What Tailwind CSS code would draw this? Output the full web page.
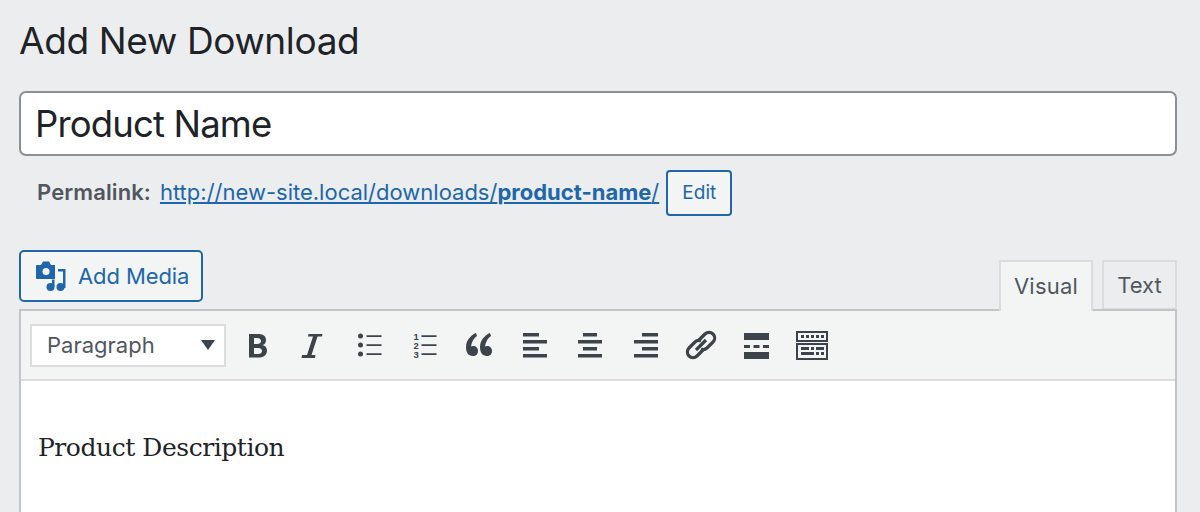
<!DOCTYPE html>
<html><head><meta charset="utf-8"><script src="https://cdn.jsdelivr.net/npm/@tailwindcss/browser@4"></script></head>
<body class="m-0 h-[512px] w-[1200px] overflow-hidden bg-[#ecedef] font-['Inter',sans-serif] text-[#1d2327]">
<div class="flex flex-col pl-[19px] pr-[23px]">
  <h1 class="mt-[19px] h-[44px] text-[37px] leading-[44px] font-normal tracking-[-0.35px] text-[#1d2327]">Add New Download</h1>
  <div class="mt-[28px] flex h-[65px] w-[1158px] items-center rounded-[7px] border-2 border-[#8c8f94] bg-white pl-[14px] pt-[2px] text-[36.5px] tracking-[-0.85px] text-[#1d2327]">Product Name</div>
  <div class="mt-[14px] flex h-[46px] items-center pl-[18px] text-[22px] text-[#50575e]">
    <span class="pb-[2px] font-semibold tracking-[0.1px]">Permalink:</span>
    <a class="ml-[9px] pb-[2px] text-[#2066ac] underline">http://new-site.local/downloads/<b class="font-bold">product-name</b>/</a>
    <span class="ml-[7px] flex h-[46px] w-[66px] items-center justify-center rounded-[4px] border-2 border-[#2066ac] bg-[#f3f5f5] pt-[1px] text-[19px] text-[#2066ac]">Edit</span>
  </div>
  <div class="mt-[34px] flex h-[59px] items-end justify-between">
    <div class="mb-[7px] flex h-[52px] w-[184px] items-center rounded-[5px] border-2 border-[#2066ac] bg-[#f3f5f5] pl-[15px] text-[22px] tracking-[-0.1px] text-[#2066ac]">
      <svg class="mr-[12px] h-[30px] w-[30px] shrink-0" viewBox="0 0 30 30" fill="#2066ac"><path d="M1 4h4l2-3.500h6L15 4h4v14H1a1 1 0 0 1-1-1V5a1 1 0 0 1 1-1z"/><circle cx="10" cy="10.500" r="3.500" fill="#f3f5f5"/><path d="M22 8h7.500v19h-2.500V10.500h-5z"/><circle cx="24.500" cy="26" r="4"/><path d="M16 18.500h2.500V26H16z"/><circle cx="14.500" cy="26" r="4"/></svg>
      Add Media
    </div>
    <div class="flex items-end">
      <div class="relative z-10 -mb-[2px] flex h-[51px] w-[94px] items-center justify-center border-2 border-b-0 border-[#dcdcde] bg-[#f3f5f5] pb-[1px] text-[22px] tracking-[0.2px] text-[#50575e]">Visual</div>
      <div class="ml-[9px] -mb-[1px] flex h-[50px] w-[75px] items-center justify-center border-2 border-[#dcdcde] bg-[#ecedef] text-[22px] text-[#50575e]">Text</div>
    </div>
  </div>
  <div class="h-[203px] w-[1158px] border-2 border-b-0 border-[#c3c4c7] bg-white">
    <div class="flex h-[70px] items-center border-b-2 border-[#dcdcde] bg-[#f3f5f5] pl-[9px] text-[#3c434a]">
      <div class="flex h-[43px] w-[196px] items-center justify-between border-2 border-[#dcdcde] bg-white pl-[15px] pr-[8px] text-[22px] text-[#50575e]">Paragraph
        <svg class="h-[12px] w-[16px]" viewBox="0 0 16 12" fill="#3c434a"><path d="M1 1h14l-7 10z"/></svg></div>
      <div class="ml-[4px] flex h-[40px] items-center">
        <svg class="ml-[9px] mr-[10.500px] h-[36px] w-[36px] shrink-0" viewBox="0 0 36 36" fill="#3c434a"><path fill-rule="evenodd" d="M10 7h9c5 0 8 2 8 6 0 3-1.500 4.500-3.500 5 2.500.5 4.500 2.500 4.500 5.500 0 4.500-3.500 7-8 7H10zM15 11v6h3c2.500 0 4-1 4-3s-1.500-3-4-3zM15 21v6h4c2.500 0 4-1 4-3s-1.500-3-4-3z"/></svg>
        <svg class="ml-[9px] mr-[10.500px] h-[36px] w-[36px] shrink-0" viewBox="1.500 0 36 36" fill="#3c434a"><path d="M15 7h14l-.6 2.500h-4.400L18 28h4l-.6 3H8l.6-3h4.900L19.500 9.500h-5z"/></svg>
        <svg class="ml-[9px] mr-[10.500px] h-[36px] w-[36px] shrink-0" viewBox="-1 0 36 36" fill="#3c434a"><circle cx="9.500" cy="9" r="2.500"/><circle cx="9.500" cy="18" r="2.500"/><circle cx="9.500" cy="27" r="2.500"/><path d="M15.500 8.200h15v1.700h-15zM15.500 17.200h15v1.700h-15zM15.500 26.200h15v1.700h-15z"/></svg>
        <svg class="ml-[9px] mr-[10.500px] h-[36px] w-[36px] shrink-0" viewBox="0 0 36 36" fill="#3c434a"><path d="M15.500 8.200h15v1.700h-15zM15.500 17.200h15v1.700h-15zM15.500 26.200h15v1.700h-15z"/><text x="7.500" y="12.500" font-size="9.500" font-weight="700" font-family="Liberation Sans">1</text><text x="7.500" y="21.500" font-size="9.500" font-weight="700" font-family="Liberation Sans">2</text><text x="7.500" y="30.500" font-size="9.500" font-weight="700" font-family="Liberation Sans">3</text></svg>
        <svg class="ml-[9px] mr-[10.500px] h-[36px] w-[36px] shrink-0" viewBox="0 0 36 36" fill="#3c434a"><path d="M15 6c-3 1-10 6-10 14 0 5 2 9 7 9 3 0 5-2 5-5 0-3-2-5-5-5-1 0-1.500.2-2 .5C10.500 15 13 11 16 9zM29 6c-3 1-10 6-10 14 0 5 2 9 7 9 3 0 5-2 5-5 0-3-2-5-5-5-1 0-1.500.2-2 .5C24.500 15 27 11 30 9z"/></svg>
        <svg class="ml-[9px] mr-[10.500px] h-[36px] w-[36px] shrink-0" viewBox="0 0 36 36" fill="#3c434a"><path d="M6 6h16v3.500H6zM6 13h24v3.500H6zM6 20h16v3.500H6zM6 27h24v3.500H6z"/></svg>
        <svg class="ml-[9px] mr-[10.500px] h-[36px] w-[36px] shrink-0" viewBox="0 0 36 36" fill="#3c434a"><path d="M11 6h14v3.500H11zM6 13h24v3.500H6zM11 20h14v3.500H11zM6 27h24v3.500H6z"/></svg>
        <svg class="ml-[9px] mr-[10.500px] h-[36px] w-[36px] shrink-0" viewBox="0 0 36 36" fill="#3c434a"><path d="M14 6h16v3.500H14zM6 13h24v3.500H6zM14 20h16v3.500H14zM6 27h24v3.500H6z"/></svg>
        <svg class="ml-[9px] mr-[10.500px] h-[36px] w-[36px] shrink-0" viewBox="0 0 36 36" fill="none" stroke="#3c434a" stroke-width="3.200"><path d="M16 13l6-6a5.500 5.500 0 0 1 8 8l-6 6a5.500 5.500 0 0 1-6 1"/><path d="M20 23l-6 6a5.500 5.500 0 0 1-8-8l6-6a5.500 5.500 0 0 1 6-1"/><path d="M13 23l10-10"/></svg>
        <svg class="ml-[9px] mr-[10.500px] h-[36px] w-[36px] shrink-0" viewBox="0 0 36 36" fill="#3c434a"><path d="M5 6h25v7H5zM5 18h6v3H5zM14.500 18h6v3h-6zM24 18h6v3h-6zM5 25h25v7H5z"/></svg>
        <svg class="ml-[9px] mr-[10px] h-[36px] w-[36px] shrink-0" viewBox="0 0 36 36" fill="#3c434a"><path fill-rule="evenodd" d="M2 4h32v11H2zM4 6v7h28V6zM2 16h32v17H2zM4 18v13h28V18z"/><path d="M7 8h3v3H7zM12 8h3v3h-3zM17 8h3v3h-3zM22 8h3v3h-3zM27 8h3v3h-3zM7 20h8v3H7zM17 20h3v3h-3zM22 20h8v3h-8zM7 25h13v3H7zM22 25h3v3h-3zM27 25h3v3h-3z"/></svg>
      </div>
    </div>
    <p class="mt-[52px] pl-[17px] font-['DejaVu_Serif',serif] text-[25px] leading-[30px] tracking-[-0.45px] text-[#1d2327]">Product Description</p>
  </div>
</div>
</body></html>
